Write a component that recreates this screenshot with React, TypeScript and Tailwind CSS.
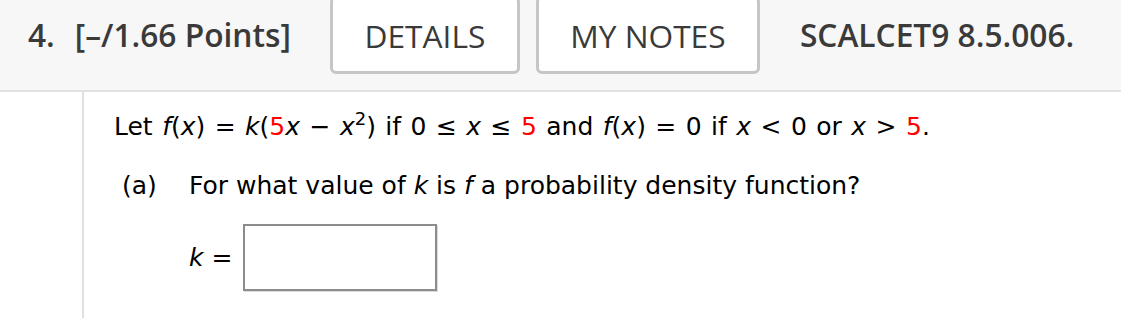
import React from "react";

const I = ({ children }: { children: React.ReactNode }) => <i className="italic">{children}</i>;
const R = ({ children }: { children: React.ReactNode }) => <span className="text-[#ff0000]">{children}</span>;

export default function App() {
  return (
    <div className="w-[1121px] h-[318px] bg-white overflow-hidden">
      <div className="h-[92px] bg-[#f7f7f7] border-b-2 border-[#e2e2e2] flex items-start font-['Open_Sans',sans-serif] text-[#3a3a3a]">
        <div className="h-[69px] flex items-center pl-[28px] text-[31.7px] font-semibold">
          <span>4.</span>
          <span className="ml-[20px]">[–/1.66 Points]</span>
        </div>
        <div className="-mt-[4px] ml-[39px] flex gap-[16px]">
          <div className="w-[190px] h-[78px] pt-[2px] bg-white border-[3px] border-[#c6c6c6] rounded-[6px] flex items-center justify-center text-[31.7px]">
            DETAILS
          </div>
          <div className="w-[224px] h-[78px] pt-[2px] bg-white border-[3px] border-[#c6c6c6] rounded-[6px] flex items-center justify-center text-[31.7px]">
            MY NOTES
          </div>
        </div>
        <div className="h-[69px] flex items-center ml-[40px] text-[31.7px] font-semibold">SCALCET9 8.5.006.</div>
      </div>
      <div className="flex h-[226px] font-['DejaVu_Sans',sans-serif] text-black">
        <div className="w-[84px] border-r-2 border-[#e0e0e0] shrink-0" />
        <div className="pl-[30px] text-[25px] leading-[30px]">
          <div className="mt-[20px] [word-spacing:1.5px]">
            Let <I>f</I>(<I>x</I>) = <I>k</I>(<R>5</R><I>x</I> − <I>x</I>
            <sup className="text-[18px] top-[-0.55em]">2</sup>) if 0 ≤ <I>x</I> ≤ <R>5</R> and <I>f</I>(<I>x</I>) = 0 if{" "}
            <I>x</I> &lt; 0 or <I>x</I> &gt; <R>5</R>.
          </div>
          <div className="mt-[29px] flex">
            <span className="ml-[8px] w-[67px]">(a)</span>
            <div>
              <div>
                For what value of <I>k</I> is <I>f</I> a probability density function?
              </div>
              <div className="mt-[23px] flex items-center">
                <span>
                  <I>k</I> =
                </span>
                <div className="ml-[11px] w-[194px] h-[67px] border-2 border-[#8c8c8c] bg-white shadow-[1px_1px_0_#dcdcdc]" />
              </div>
            </div>
          </div>
        </div>
      </div>
    </div>
  );
}
